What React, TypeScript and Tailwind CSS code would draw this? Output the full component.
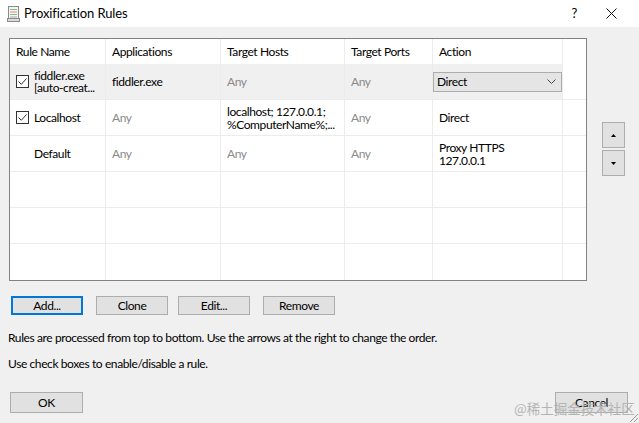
import React from "react";

const F = { fontFamily: 'Lato, "Noto Sans CJK SC", sans-serif' };

function Check() {
  return (
    <span className="inline-flex items-center justify-center w-[13px] h-[13px] border border-[#333] bg-white shrink-0">
      <svg width="11" height="11" viewBox="0 0 11 11">
        <path d="M1.5 5.5 L4.3 8.3 L9.5 2.5" fill="none" stroke="#333" strokeWidth="1" />
      </svg>
    </span>
  );
}

const cols = "grid grid-cols-[96px_115px_124px_88px_130px_23px]";
const cell = "border-r border-[#ececec] px-[6px] flex items-center whitespace-nowrap overflow-hidden";

function Row({ children }: { children: React.ReactNode }) {
  return <div className={`${cols} h-[36px] border-b border-[#ececec] relative`}>{children}</div>;
}

const Btn = ({ label, cls }: { label: string; cls: string }) => (
  <div className={`flex items-center justify-center bg-[#e1e1e1] border border-[#adadad] text-[12px] text-black ${cls}`}>{label}</div>
);

export default function App() {
  return (
    <div className="w-[639px] h-[423px] bg-[#f0f0f0] relative overflow-hidden text-[12px] tracking-[-0.4px] text-black" style={F}>
      {/* Title bar */}
      <div className="h-[27px] bg-white flex items-center">
        <svg className="ml-[7px]" width="14" height="17" viewBox="0 0 14 17">
          <rect x="1.5" y="1.5" width="10" height="13" fill="#f4f4f4" stroke="#8a8a8a" />
          <rect x="0.5" y="13.5" width="12" height="3" fill="#dcdcdc" stroke="#8a8a8a" />
          <line x1="3" y1="4.5" x2="10" y2="4.5" stroke="#7fc47f" />
          <line x1="3" y1="7" x2="10" y2="7" stroke="#e58b8b" />
          <line x1="3" y1="9.5" x2="10" y2="9.5" stroke="#7fc47f" />
          <line x1="3" y1="12" x2="10" y2="12" stroke="#aaaaaa" />
        </svg>
        <span className="ml-[3px] text-[13px] tracking-[-0.1px]">Proxification Rules</span>
        <span className="ml-auto mr-[29px] text-[13px]">?</span>
        <svg className="mr-[22px]" width="11" height="11" viewBox="0 0 11 11">
          <path d="M0.5 0.5 L10.5 10.5 M10.5 0.5 L0.5 10.5" stroke="#111" strokeWidth="1" />
        </svg>
      </div>

      <div className="pl-[9px] pt-[11px] flex">
        {/* Table */}
        <div className="w-[578px] h-[243px] border border-[#828282] bg-white">
          <div className={`${cols} h-[25px]`}>
            <div className={cell}>Rule Name</div>
            <div className={cell}>Applications</div>
            <div className={cell}>Target Hosts</div>
            <div className={cell}>Target Ports</div>
            <div className={cell}>Action</div>
            <div />
          </div>
          <Row>
            <div className={`${cell} bg-[#f0f0f0] gap-[5px]`}>
              <Check />
              <div className="leading-[12px]">fiddler.exe<br />[auto-creat...</div>
            </div>
            <div className={`${cell} bg-[#f0f0f0]`}>fiddler.exe</div>
            <div className={`${cell} bg-[#f0f0f0] text-[#8a8a8a]`}>Any</div>
            <div className={`${cell} bg-[#f0f0f0] text-[#8a8a8a]`}>Any</div>
            <div className={`border-r border-[#ececec] bg-[#f0f0f0] flex items-center`}>
              <div className="w-[129px] h-[20px] bg-[#e5e5e5] border border-[#adadad] flex items-center pl-[3px]">
                <span>Direct</span>
                <svg className="ml-auto mr-[5px]" width="9" height="5" viewBox="0 0 9 5">
                  <path d="M0.5 0.5 L4.5 4.5 L8.5 0.5" fill="none" stroke="#444" />
                </svg>
              </div>
            </div>
            <div />
          </Row>
          <Row>
            <div className={`${cell} gap-[5px]`}>
              <Check />
              <span>Localhost</span>
            </div>
            <div className={`${cell} text-[#8a8a8a]`}>Any</div>
            <div className={`${cell} leading-[13px]`}>
              <div>localhost; 127.0.0.1;<br />%ComputerName%;...</div>
            </div>
            <div className={`${cell} text-[#8a8a8a]`}>Any</div>
            <div className={cell}>Direct</div>
            <div />
          </Row>
          <Row>
            <div className={`${cell} pl-[24px]`}>Default</div>
            <div className={`${cell} text-[#8a8a8a]`}>Any</div>
            <div className={`${cell} text-[#8a8a8a]`}>Any</div>
            <div className={`${cell} text-[#8a8a8a]`}>Any</div>
            <div className={`${cell} leading-[13px]`}>
              <div>Proxy HTTPS<br />127.0.0.1</div>
            </div>
            <div />
          </Row>
          {[0, 1, 2].map((i) => (
            <div key={i} className={`${cols} h-[36px] ${i < 2 ? "border-b border-[#ececec]" : ""}`}>
              <div className={cell} />
              <div className={cell} />
              <div className={cell} />
              <div className={cell} />
              <div className={cell} />
              <div />
            </div>
          ))}
        </div>

        {/* Up/down */}
        <div className="ml-[15px] mt-[84px] flex flex-col gap-[2px]">
          <div className="w-[23px] h-[26px] bg-[#e1e1e1] border border-[#adadad] flex items-center justify-center">
            <svg width="5" height="3" viewBox="0 0 5 3"><path d="M2.5 0 L5 3 L0 3 Z" fill="#000" /></svg>
          </div>
          <div className="w-[23px] h-[26px] bg-[#e1e1e1] border border-[#adadad] flex items-center justify-center">
            <svg width="5" height="3" viewBox="0 0 5 3"><path d="M0 0 L5 0 L2.5 3 Z" fill="#000" /></svg>
          </div>
        </div>
      </div>

      {/* Buttons */}
      <div className="flex mt-[15px] pl-[11px]">
        <div className="w-[72px] h-[19px] bg-[#e1e1e1] border-2 border-[#0078d7] flex items-center justify-center">Add...</div>
        <Btn label="Clone" cls="w-[72px] h-[19px] ml-[13px]" />
        <Btn label="Edit..." cls="w-[72px] h-[19px] ml-[10px]" />
        <Btn label="Remove" cls="w-[72px] h-[19px] ml-[13px]" />
      </div>

      <div className="pl-[8px] mt-[15px] leading-[16px]">Rules are processed from top to bottom. Use the arrows at the right to change the order.</div>
      <div className="pl-[8px] mt-[10px] leading-[16px]">Use check boxes to enable/disable a rule.</div>

      <div className="flex justify-between pl-[10px] pr-[11px] mt-[20px]">
        <Btn label="OK" cls="w-[73px] h-[21px]" />
        <Btn label="Cancel" cls="w-[73px] h-[21px]" />
      </div>

      <div className="absolute left-[514px] top-[399px] text-[13.5px] leading-[18px] tracking-normal text-[#b4b4b4]" style={{ fontFamily: '"Noto Sans CJK SC", sans-serif' }}>
        @稀土掘金技术社区
      </div>
      <svg className="absolute right-0 bottom-0" width="12" height="12" viewBox="0 0 12 12">
        <path d="M11 3 L3 11 M11 7 L7 11" stroke="#9a9a9a" />
      </svg>
    </div>
  );
}
